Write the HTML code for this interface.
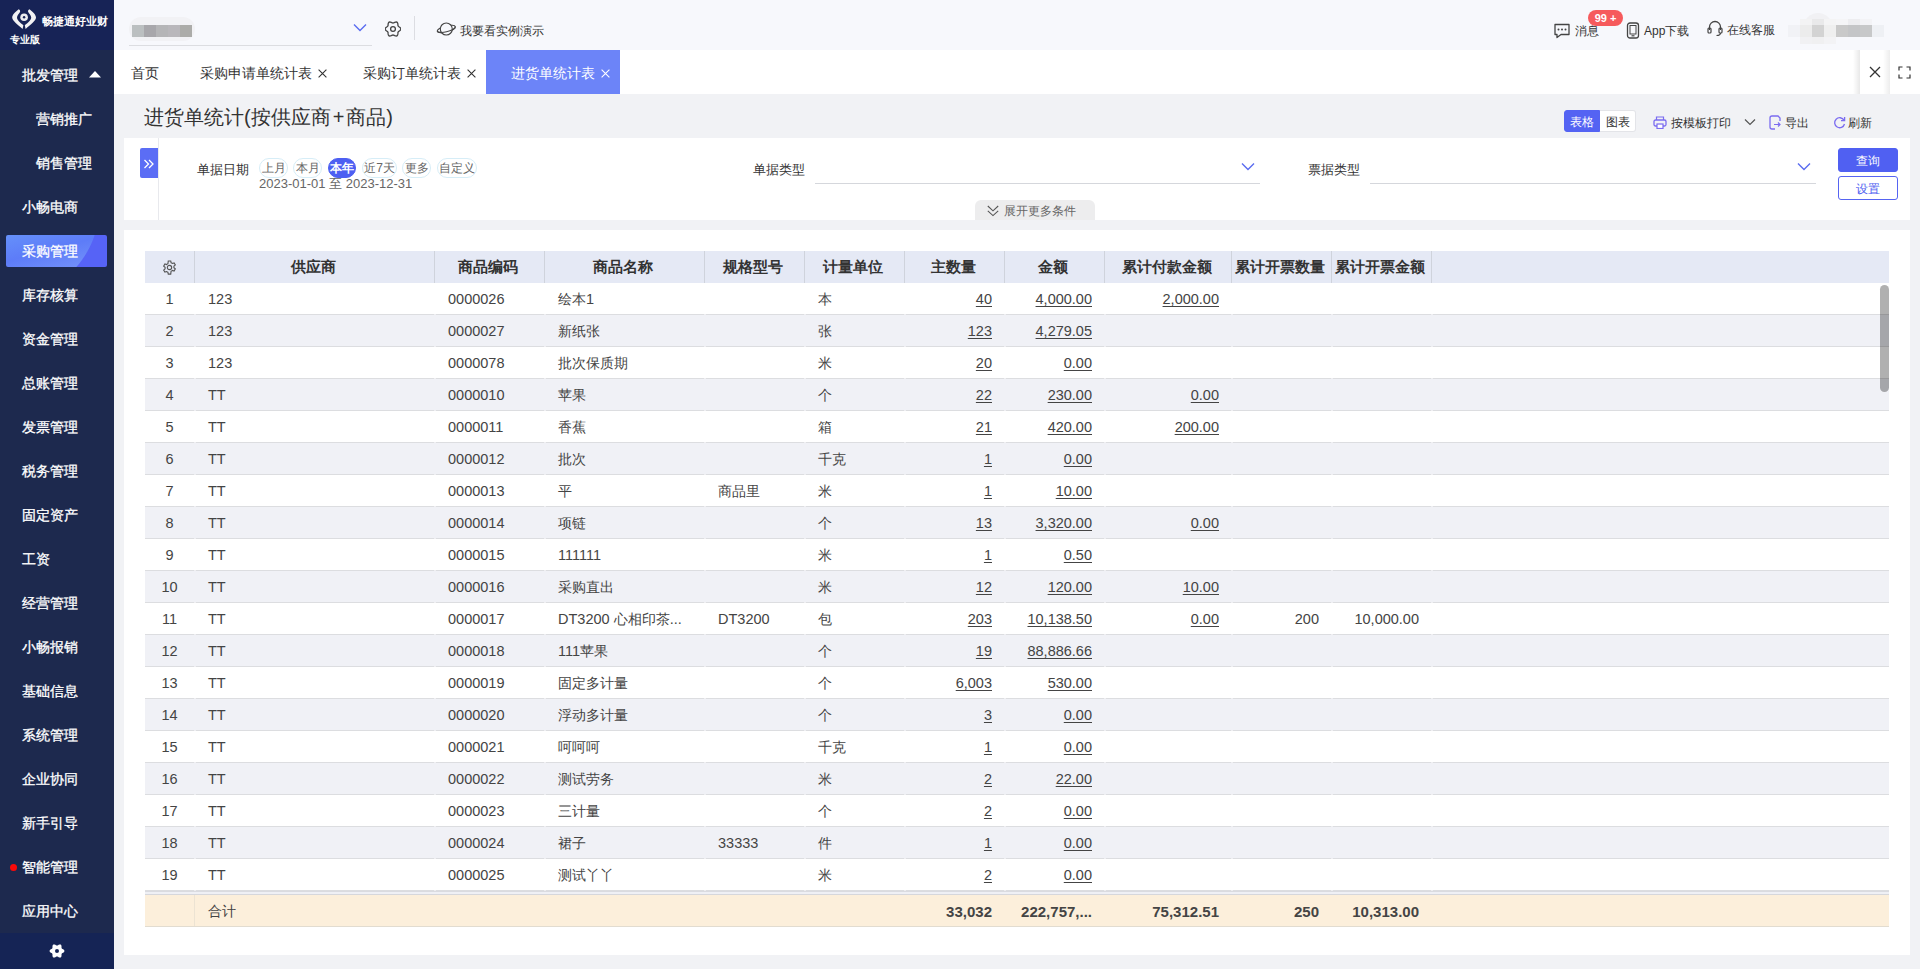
<!DOCTYPE html>
<html><head><meta charset="utf-8">
<style>
*{margin:0;padding:0;box-sizing:border-box}
html,body{width:1920px;height:969px;overflow:hidden;background:#f1f2f5;font-family:"Liberation Sans",sans-serif;color:#333}
.abs{position:absolute}
#side{position:absolute;left:0;top:0;width:114px;height:969px;background:#1d294e}
#logo{position:absolute;left:0;top:0;width:114px;height:50px;background:#172356}
.logot{color:#fff;font-size:11px;line-height:14px;white-space:nowrap;font-weight:bold}
.logot2{color:#fff;font-size:10px;line-height:14px;white-space:nowrap;font-weight:bold}
#sbot{position:absolute;left:0;top:933px;width:114px;height:36px;background:#152455}
.mi{position:absolute;color:#fff;font-size:14px;line-height:20px;white-space:nowrap;-webkit-text-stroke:0.3px #fff}
.act{position:absolute;left:6px;top:235px;width:101px;height:32px;border-radius:2px;background:radial-gradient(circle 95.5px at -1px -30px,rgba(0,0,0,0) 98.5%,#5663f6 99.5%),linear-gradient(165deg,#6590fa 0%,#5d7cf8 45%,#7895fa 100%)}
#top{position:absolute;left:114px;top:0;width:1806px;height:50px;background:#f7f8fc}
.toptxt{font-size:12px;line-height:20px;color:#333;white-space:nowrap}
.badge{width:35px;height:16px;line-height:16px;border-radius:8px;background:#f65a5c;color:#fff;font-size:11px;font-weight:bold;text-align:center;white-space:nowrap}
#tabs{position:absolute;left:114px;top:50px;width:1806px;height:44px;background:#fff}
.tab{position:absolute;top:51px;height:44px;line-height:44px;font-size:14px;color:#333;white-space:nowrap}
.x{margin-left:6px;display:inline-block;vertical-align:0px}
#title{position:absolute;left:144px;top:104px;font-size:20px;color:#333;line-height:26px;white-space:nowrap}
.seg{height:22px;line-height:22px;font-size:12px;text-align:center;border:1px solid #e3e4e8;color:#333}
.tool{font-size:12px;line-height:18px;color:#333;white-space:nowrap}
#filter{position:absolute;left:124px;top:138px;width:1786px;height:82px;background:#fff}
.flab{font-size:13px;line-height:18px;color:#333;white-space:nowrap}
.dt{font-size:13px;line-height:16px;color:#666;white-space:nowrap}
.more{font-size:12px;line-height:16px;color:#666;white-space:nowrap}
.btn{width:60px;height:24px;line-height:25px;font-size:12px;text-align:center;border:1px solid;border-radius:3px}
#tbl{position:absolute;left:124px;top:230px;width:1786px;height:725px;background:#fff}
.pill{position:absolute;top:158px;height:20px;line-height:19px;font-size:12px;color:#666;border:1px solid #d6edf7;border-radius:10px;text-align:center;white-space:nowrap}
.hd{position:absolute;top:251px;height:32px;line-height:32px;font-size:15px;font-weight:bold;color:#333;text-align:center;white-space:nowrap}
.row{position:absolute;left:145px;width:1744px;height:32px;border-bottom:1px solid #dcdde0}
.c{position:absolute;top:1px;height:31px;line-height:31px;font-size:14.5px;color:#444;white-space:nowrap}
.b{font-weight:bold;font-size:15px}
.u{text-decoration:underline;text-underline-offset:2px}
.k{font-size:14px}

</style></head><body>
<div id="side">
<div id="logo"><svg class="abs" style="left:0;top:0" width="48" height="34" viewBox="0 0 48 34"><path d="M18.7 9.2 C15.5 11.5 12.2 14.8 12.2 17.6 C12.2 20.5 17.5 25 22.6 28.9 L23.4 25.3 C20.5 23 17 20.3 17 17.6 C17 15.3 19.2 13.4 20 12 C20.5 10.8 19.8 9.6 18.7 9.2 Z" fill="#f2f2f4"/><path d="M29.5 9.2 C32.7 11.5 36 14.8 36 17.6 C36 20.5 30.7 25 25.6 28.9 L24.8 25.3 C27.7 23 31.2 20.3 31.2 17.6 C31.2 15.3 29 13.4 28.2 12 C27.7 10.8 28.4 9.6 29.5 9.2 Z" fill="#f2f2f4"/><circle cx="24.1" cy="17.3" r="3.8" fill="#ececef"/><circle cx="24.1" cy="17.3" r="1.2" fill="#172356"/></svg><div class="abs logot" style="left:42px;top:14px">畅捷通好业财</div><div class="abs logot2" style="left:10px;top:33px">专业版</div></div>
<div class="mi" style="left:22px;top:65px">批发管理</div><div class="mi" style="left:36px;top:109px">营销推广</div><div class="mi" style="left:36px;top:153px">销售管理</div><div class="mi" style="left:22px;top:197px">小畅电商</div><div class="act"></div><div class="mi" style="left:22px;top:241px">采购管理</div><div class="mi" style="left:22px;top:285px">库存核算</div><div class="mi" style="left:22px;top:329px">资金管理</div><div class="mi" style="left:22px;top:373px">总账管理</div><div class="mi" style="left:22px;top:417px">发票管理</div><div class="mi" style="left:22px;top:461px">税务管理</div><div class="mi" style="left:22px;top:505px">固定资产</div><div class="mi" style="left:22px;top:549px">工资</div><div class="mi" style="left:22px;top:593px">经营管理</div><div class="mi" style="left:22px;top:637px">小畅报销</div><div class="mi" style="left:22px;top:681px">基础信息</div><div class="mi" style="left:22px;top:725px">系统管理</div><div class="mi" style="left:22px;top:769px">企业协同</div><div class="mi" style="left:22px;top:813px">新手引导</div><div class="mi" style="left:22px;top:857px">智能管理</div><div class="mi" style="left:22px;top:901px">应用中心</div><svg class="abs" style="left:89px;top:70px" width="12" height="8" viewBox="0 0 12 8"><path d="M0 7.5 L6 1 L12 7.5Z" fill="#fff"/></svg><div class="abs" style="left:10px;top:864px;width:7px;height:7px;border-radius:50%;background:#fa0a0a"></div><div id="sbot"><svg class="abs" style="left:49px;top:10px" width="16" height="16" viewBox="0 0 16 16"><path fill="#fff" fill-rule="evenodd" d="M15.40 8.00 L15.24 8.63 L14.80 9.20 L14.18 9.66 L13.54 10.02 L13.02 10.34 L12.68 10.70 L12.53 11.17 L12.52 11.79 L12.53 12.53 L12.44 13.29 L12.17 13.95 L11.70 14.41 L11.07 14.59 L10.36 14.48 L9.66 14.18 L9.02 13.81 L8.48 13.51 L8.00 13.40 L7.52 13.51 L6.98 13.81 L6.34 14.18 L5.64 14.48 L4.93 14.59 L4.30 14.41 L3.83 13.95 L3.56 13.29 L3.47 12.53 L3.48 11.79 L3.47 11.17 L3.32 10.70 L2.98 10.34 L2.46 10.02 L1.82 9.66 L1.20 9.20 L0.76 8.63 L0.60 8.00 L0.76 7.37 L1.20 6.80 L1.82 6.34 L2.46 5.98 L2.98 5.66 L3.32 5.30 L3.47 4.83 L3.48 4.21 L3.47 3.47 L3.56 2.71 L3.83 2.05 L4.30 1.59 L4.93 1.41 L5.64 1.52 L6.34 1.82 L6.98 2.19 L7.52 2.49 L8.00 2.60 L8.48 2.49 L9.02 2.19 L9.66 1.82 L10.36 1.52 L11.07 1.41 L11.70 1.59 L12.17 2.05 L12.44 2.71 L12.53 3.47 L12.52 4.21 L12.53 4.83 L12.68 5.30 L13.02 5.66 L13.54 5.98 L14.18 6.34 L14.80 6.80 L15.24 7.37 L15.40 8.00Z M10 8 A2 2 0 1 0 6 8 A2 2 0 1 0 10 8Z"/></svg></div></div>
<div id="top"></div>
<div class="abs" style="left:129px;top:17px;width:66px;height:24px;border-radius:12px;background:#f2f2f5"></div><div class="abs" style="left:132px;top:25px;width:12px;height:12px;background:#bbbfc0"></div><div class="abs" style="left:144px;top:25px;width:12px;height:12px;background:#a8a7ab"></div><div class="abs" style="left:156px;top:25px;width:12px;height:12px;background:#b5b5b7"></div><div class="abs" style="left:168px;top:25px;width:12px;height:12px;background:#b9b7bb"></div><div class="abs" style="left:180px;top:25px;width:12px;height:12px;background:#acaca9"></div><div class="abs" style="left:129px;top:45px;width:243px;height:1px;background:#dcdde1"></div><svg class="abs" style="left:353px;top:23px" width="14" height="9" viewBox="0 0 14 9"><path d="M1 1.5 L7 7.5 L13 1.5" fill="none" stroke="#5a6cf0" stroke-width="1.4"/></svg><svg class="abs" style="left:385px;top:21px" width="16" height="16" viewBox="0 0 16 16"><path d="M15.85 8.00 L15.69 8.67 L15.26 9.28 L14.66 9.79 L14.04 10.20 L13.51 10.57 L13.15 10.97 L12.98 11.49 L12.92 12.13 L12.88 12.88 L12.74 13.65 L12.43 14.33 L11.93 14.80 L11.26 15.00 L10.52 14.93 L9.79 14.66 L9.12 14.33 L8.53 14.05 L8.00 13.95 L7.47 14.05 L6.88 14.33 L6.21 14.66 L5.48 14.93 L4.74 15.00 L4.08 14.80 L3.57 14.33 L3.26 13.65 L3.12 12.88 L3.08 12.13 L3.02 11.49 L2.85 10.97 L2.49 10.57 L1.96 10.20 L1.34 9.79 L0.74 9.28 L0.31 8.67 L0.15 8.00 L0.31 7.33 L0.74 6.72 L1.34 6.21 L1.96 5.80 L2.49 5.43 L2.85 5.02 L3.02 4.51 L3.08 3.87 L3.12 3.12 L3.26 2.35 L3.57 1.67 L4.07 1.20 L4.74 1.00 L5.48 1.07 L6.21 1.34 L6.88 1.67 L7.47 1.95 L8.00 2.05 L8.53 1.95 L9.12 1.67 L9.79 1.34 L10.52 1.07 L11.26 1.00 L11.93 1.20 L12.43 1.67 L12.74 2.35 L12.88 3.12 L12.92 3.87 L12.98 4.51 L13.15 5.02 L13.51 5.43 L14.04 5.80 L14.66 6.21 L15.26 6.72 L15.69 7.33 L15.85 8.00Z" fill="none" stroke="#444" stroke-width="1.3"/><circle cx="8" cy="8" r="2.4" fill="none" stroke="#444" stroke-width="1.3"/></svg><div class="abs" style="left:414px;top:16px;width:1px;height:24px;background:#dcdde2"></div><svg class="abs" style="left:436px;top:21px" width="21" height="16" viewBox="0 0 21 16"><ellipse cx="10.3" cy="8" rx="9.3" ry="3.1" transform="rotate(-14 10.3 8)" fill="none" stroke="#444" stroke-width="1.1"/><circle cx="10.3" cy="8" r="6" fill="#f7f8fc" stroke="#444" stroke-width="1.1"/><path d="M1.2 9.8 A9.3 3.1 -14 0 0 19.3 5.6" transform="rotate(0)" fill="none" stroke="#444" stroke-width="1.1"/></svg><div class="abs toptxt" style="left:460px;top:21px">我要看实例演示</div><svg class="abs" style="left:1553px;top:22px" width="18" height="18" viewBox="0 0 18 18"><path d="M2 2.5h14v10H8l-4 3v-3H2Z" fill="none" stroke="#444" stroke-width="1.3" stroke-linejoin="round"/><circle cx="5.5" cy="7.5" r="1" fill="#444"/><circle cx="9" cy="7.5" r="1" fill="#444"/><circle cx="12.5" cy="7.5" r="1" fill="#444"/></svg><div class="abs toptxt" style="left:1575px;top:21px">消息</div><div class="abs badge" style="left:1588px;top:10px">99 +</div><svg class="abs" style="left:1626px;top:22px" width="14" height="17" viewBox="0 0 14 17"><rect x="1.5" y="1" width="11" height="15" rx="2.5" fill="none" stroke="#444" stroke-width="1.3"/><rect x="4" y="3.5" width="6" height="8.5" fill="none" stroke="#444" stroke-width="1"/><path d="M5.5 13.8h3" stroke="#444" stroke-width="1.2"/></svg><div class="abs toptxt" style="left:1644px;top:21px">App下载</div><svg class="abs" style="left:1707px;top:20px" width="16" height="17" viewBox="0 0 16 17"><path d="M2.5 10V7a5.5 5.5 0 0 1 11 0v3" fill="none" stroke="#444" stroke-width="1.3"/><rect x="1" y="8" width="3" height="5" rx="1" fill="none" stroke="#444" stroke-width="1.2"/><rect x="12" y="8" width="3" height="5" rx="1" fill="none" stroke="#444" stroke-width="1.2"/><path d="M13.5 13c0 2-2 2.5-4 2.5" fill="none" stroke="#444" stroke-width="1.2"/></svg><div class="abs toptxt" style="left:1727px;top:20px">在线客服</div><div class="abs" style="left:1803px;top:13px;width:30px;height:31px;border-radius:50%;background:#f1f1f4"></div><div class="abs" style="left:1788px;top:25px;width:12px;height:12px;background:#f1f2f6"></div><div class="abs" style="left:1800px;top:25px;width:12px;height:12px;background:#ececec"></div><div class="abs" style="left:1812px;top:25px;width:12px;height:12px;background:#d3d3d3"></div><div class="abs" style="left:1824px;top:25px;width:12px;height:12px;background:#efefef"></div><div class="abs" style="left:1836px;top:25px;width:12px;height:12px;background:#c9c9c9"></div><div class="abs" style="left:1848px;top:25px;width:12px;height:12px;background:#c4c5c7"></div><div class="abs" style="left:1860px;top:25px;width:12px;height:12px;background:#c7c8c9"></div><div class="abs" style="left:1872px;top:25px;width:12px;height:12px;background:#eef0f4"></div><div class="abs" style="left:1800px;top:19px;width:12px;height:6px;background:#f3f3f4"></div><div class="abs" style="left:1812px;top:19px;width:12px;height:6px;background:#e9e9ea"></div><div class="abs" style="left:1824px;top:19px;width:12px;height:6px;background:#f4f4f5"></div><div class="abs" style="left:1836px;top:19px;width:12px;height:6px;background:#f5f5f7"></div><div class="abs" style="left:1848px;top:19px;width:12px;height:6px;background:#ededf0"></div><div class="abs" style="left:1860px;top:19px;width:12px;height:6px;background:#f3f3f6"></div><div class="abs" style="left:1800px;top:37px;width:12px;height:7px;background:#f1f1f3"></div><div class="abs" style="left:1812px;top:37px;width:12px;height:7px;background:#f0f0f1"></div><div class="abs" style="left:1824px;top:37px;width:12px;height:7px;background:#f3f3f5"></div><div id="tabs"></div>
<div class="tab" style="left:131px">首页</div><div class="tab" style="left:200px">采购申请单统计表<span class="x"><svg width="9" height="9" viewBox="0 0 9 9"><path d="M0.6 0.6L8.4 8.4M8.4 0.6L0.6 8.4" stroke="currentColor" stroke-width="1.1"/></svg></span></div><div class="tab" style="left:363px">采购订单统计表<span class="x"><svg width="9" height="9" viewBox="0 0 9 9"><path d="M0.6 0.6L8.4 8.4M8.4 0.6L0.6 8.4" stroke="currentColor" stroke-width="1.1"/></svg></span></div><div class="abs" style="left:486px;top:50px;width:134px;height:44px;background:#6c84f8"></div><div class="tab" style="left:511px;color:#fff">进货单统计表<span class="x"><svg width="9" height="9" viewBox="0 0 9 9"><path d="M0.6 0.6L8.4 8.4M8.4 0.6L0.6 8.4" stroke="currentColor" stroke-width="1.1"/></svg></span></div><div class="abs" style="left:1853px;top:50px;width:7px;height:44px;background:linear-gradient(90deg,rgba(0,0,0,0),rgba(0,0,0,0.09))"></div><div class="abs" style="left:1883px;top:50px;width:7px;height:44px;background:linear-gradient(90deg,rgba(0,0,0,0),rgba(0,0,0,0.07))"></div><svg class="abs" style="left:1869px;top:66px" width="12" height="12" viewBox="0 0 12 12"><path d="M1 1L11 11M11 1L1 11" stroke="#333" stroke-width="1.3"/></svg><svg class="abs" style="left:1898px;top:66px" width="13" height="13" viewBox="0 0 13 13"><path d="M1 4.5V1h3.5M8.5 1H12v3.5M12 8.5V12H8.5M4.5 12H1V8.5" fill="none" stroke="#333" stroke-width="1.2"/></svg><div id="title">进货单统计(按供应商<span style="padding:0 2px">+</span>商品)</div>
<div class="abs seg" style="left:1564px;top:110px;width:36px;background:#5463f3;color:#fff;border-color:#5463f3;border-radius:3px 0 0 3px">表格</div><div class="abs seg" style="left:1600px;top:110px;width:36px;background:#fff;border-left:none;border-radius:0 3px 3px 0">图表</div><svg class="abs" style="left:1653px;top:116px" width="14" height="13" viewBox="0 0 14 13"><path d="M3.5 4V1h7v3" fill="none" stroke="#7b6cf0" stroke-width="1.2"/><rect x="1" y="4" width="12" height="6" rx="1.5" fill="none" stroke="#7b6cf0" stroke-width="1.3"/><rect x="4" y="8" width="6" height="4.5" fill="#fff" stroke="#7b6cf0" stroke-width="1.2"/></svg><div class="abs tool" style="left:1671px;top:114px">按模板打印</div><svg class="abs" style="left:1744px;top:118px" width="12" height="8" viewBox="0 0 12 8"><path d="M1 1.5L6 6.5L11 1.5" fill="none" stroke="#555" stroke-width="1.2"/></svg><svg class="abs" style="left:1769px;top:115px" width="12" height="15" viewBox="0 0 12 15"><path d="M6 1H3a2 2 0 0 0-2 2v9a2 2 0 0 0 2 2h3M6 1h3l2 2v3" fill="none" stroke="#7b6cf0" stroke-width="1.3"/><path d="M5 9.5h6M9 7.5l2 2-2 2" fill="none" stroke="#7b6cf0" stroke-width="1.2"/></svg><div class="abs tool" style="left:1785px;top:114px">导出</div><svg class="abs" style="left:1833px;top:116px" width="13" height="13" viewBox="0 0 13 13"><path d="M11 4.2A5 5 0 1 0 11.5 8" fill="none" stroke="#7b6cf0" stroke-width="1.3"/><path d="M11.6 1v3.6H8" fill="none" stroke="#7b6cf0" stroke-width="1.3"/></svg><div class="abs tool" style="left:1848px;top:114px">刷新</div><div id="filter"></div>
<div class="abs" style="left:140px;top:148px;width:18px;height:30px;background:#5b6df5;border-radius:2px 0 0 2px"></div><svg class="abs" style="left:143px;top:159px" width="12" height="10" viewBox="0 0 12 10"><path d="M1.5 1L5.5 5L1.5 9M6 1L10 5L6 9" fill="none" stroke="#fff" stroke-width="1.3"/></svg><div class="abs" style="left:158px;top:138px;width:1px;height:82px;background:#e8e9ed"></div><div class="abs flab" style="left:197px;top:161px">单据日期</div><div class="pill" style="left:259px;width:29px">上月</div><div class="pill" style="left:293px;width:29px">本月</div><div class="pill" style="left:328px;width:28px;background:#4d5ff2;border-color:#4d5ff2;color:#fff;font-weight:bold">本年</div><div class="pill" style="left:362px;width:35px">近7天</div><div class="pill" style="left:402px;width:29px">更多</div><div class="pill" style="left:437px;width:40px">自定义</div><div class="abs dt" style="left:259px;top:176px">2023-01-01 至 2023-12-31</div><div class="abs flab" style="left:753px;top:161px">单据类型</div><div class="abs" style="left:815px;top:183px;width:445px;height:1px;background:#d5d7dc"></div><svg class="abs" style="left:1241px;top:162px" width="14" height="9" viewBox="0 0 14 9"><path d="M1 1.5L7 7.5L13 1.5" fill="none" stroke="#5a6cf0" stroke-width="1.4"/></svg><div class="abs flab" style="left:1308px;top:161px">票据类型</div><div class="abs" style="left:1370px;top:183px;width:446px;height:1px;background:#d5d7dc"></div><svg class="abs" style="left:1797px;top:162px" width="14" height="9" viewBox="0 0 14 9"><path d="M1 1.5L7 7.5L13 1.5" fill="none" stroke="#5a6cf0" stroke-width="1.4"/></svg><div class="abs btn" style="left:1838px;top:148px;background:#5060f2;color:#fff;border-color:#5060f2">查询</div><div class="abs btn" style="left:1838px;top:176px;background:#fff;color:#4d5cf0;border-color:#5664f2">设置</div><div class="abs" style="left:975px;top:200px;width:120px;height:20px;background:#ededee;border-radius:6px 6px 0 0"></div><svg class="abs" style="left:987px;top:205px" width="12" height="12" viewBox="0 0 12 12"><path d="M0.8 1L6 5.8L11.2 1M0.8 5.8L6 10.6L11.2 5.8" fill="none" stroke="#555" stroke-width="1.1"/></svg><div class="abs more" style="left:1004px;top:203px">展开更多条件</div><div id="tbl"></div>
<div class="abs" style="left:145px;top:251px;width:1744px;height:32px;background:#e5e9f5"></div><div class="abs" style="left:194px;top:251px;width:1px;height:32px;background:#cfd3dc"></div><div class="abs" style="left:434px;top:251px;width:1px;height:32px;background:#cfd3dc"></div><div class="abs" style="left:544px;top:251px;width:1px;height:32px;background:#cfd3dc"></div><div class="abs" style="left:704px;top:251px;width:1px;height:32px;background:#cfd3dc"></div><div class="abs" style="left:804px;top:251px;width:1px;height:32px;background:#cfd3dc"></div><div class="abs" style="left:904px;top:251px;width:1px;height:32px;background:#cfd3dc"></div><div class="abs" style="left:1004px;top:251px;width:1px;height:32px;background:#cfd3dc"></div><div class="abs" style="left:1104px;top:251px;width:1px;height:32px;background:#cfd3dc"></div><div class="abs" style="left:1231px;top:251px;width:1px;height:32px;background:#cfd3dc"></div><div class="abs" style="left:1331px;top:251px;width:1px;height:32px;background:#cfd3dc"></div><div class="abs" style="left:1431px;top:251px;width:1px;height:32px;background:#cfd3dc"></div><svg class="abs" style="left:162px;top:260px" width="15" height="15" viewBox="0 0 16 16"><path fill="none" stroke="#555" stroke-width="1.2" d="M6.7 1h2.6l0.4 1.9a5.3 5.3 0 0 1 1.4 0.8l1.8-0.6 1.3 2.2-1.5 1.3a5.3 5.3 0 0 1 0 1.6l1.5 1.3-1.3 2.2-1.8-0.6a5.3 5.3 0 0 1-1.4 0.8L9.3 15H6.7l-0.4-1.9a5.3 5.3 0 0 1-1.4-0.8l-1.8 0.6-1.3-2.2 1.5-1.3a5.3 5.3 0 0 1 0-1.6L1.8 6.5l1.3-2.2 1.8 0.6a5.3 5.3 0 0 1 1.4-0.8Z"/><circle cx="8" cy="8" r="2.3" fill="none" stroke="#555" stroke-width="1.2"/></svg><div class="hd" style="left:193px;width:240px">供应商</div><div class="hd" style="left:433px;width:110px">商品编码</div><div class="hd" style="left:543px;width:160px">商品名称</div><div class="hd" style="left:703px;width:100px">规格型号</div><div class="hd" style="left:803px;width:100px">计量单位</div><div class="hd" style="left:903px;width:100px">主数量</div><div class="hd" style="left:1003px;width:100px">金额</div><div class="hd" style="left:1103px;width:127px">累计付款金额</div><div class="hd" style="left:1230px;width:100px">累计开票数量</div><div class="hd" style="left:1330px;width:100px">累计开票金额</div><div class="row" style="top:283px;background:#fff"><div class="c" style="left:0;width:49px;text-align:center">1</div><div class="c" style="left:63px">123</div><div class="c" style="left:303px">0000026</div><div class="c" style="left:413px"><span class="k">绘本</span>1</div><div class="c" style="left:673px"><span class="k">本</span></div><div class="c r u" style="right:897px">40</div><div class="c r u" style="right:797px">4,000.00</div><div class="c r u" style="right:670px">2,000.00</div></div>
<div class="row" style="top:315px;background:#f0f1f6"><div class="c" style="left:0;width:49px;text-align:center">2</div><div class="c" style="left:63px">123</div><div class="c" style="left:303px">0000027</div><div class="c" style="left:413px"><span class="k">新纸张</span></div><div class="c" style="left:673px"><span class="k">张</span></div><div class="c r u" style="right:897px">123</div><div class="c r u" style="right:797px">4,279.05</div></div>
<div class="row" style="top:347px;background:#fff"><div class="c" style="left:0;width:49px;text-align:center">3</div><div class="c" style="left:63px">123</div><div class="c" style="left:303px">0000078</div><div class="c" style="left:413px"><span class="k">批次保质期</span></div><div class="c" style="left:673px"><span class="k">米</span></div><div class="c r u" style="right:897px">20</div><div class="c r u" style="right:797px">0.00</div></div>
<div class="row" style="top:379px;background:#f0f1f6"><div class="c" style="left:0;width:49px;text-align:center">4</div><div class="c" style="left:63px">TT</div><div class="c" style="left:303px">0000010</div><div class="c" style="left:413px"><span class="k">苹果</span></div><div class="c" style="left:673px"><span class="k">个</span></div><div class="c r u" style="right:897px">22</div><div class="c r u" style="right:797px">230.00</div><div class="c r u" style="right:670px">0.00</div></div>
<div class="row" style="top:411px;background:#fff"><div class="c" style="left:0;width:49px;text-align:center">5</div><div class="c" style="left:63px">TT</div><div class="c" style="left:303px">0000011</div><div class="c" style="left:413px"><span class="k">香蕉</span></div><div class="c" style="left:673px"><span class="k">箱</span></div><div class="c r u" style="right:897px">21</div><div class="c r u" style="right:797px">420.00</div><div class="c r u" style="right:670px">200.00</div></div>
<div class="row" style="top:443px;background:#f0f1f6"><div class="c" style="left:0;width:49px;text-align:center">6</div><div class="c" style="left:63px">TT</div><div class="c" style="left:303px">0000012</div><div class="c" style="left:413px"><span class="k">批次</span></div><div class="c" style="left:673px"><span class="k">千克</span></div><div class="c r u" style="right:897px">1</div><div class="c r u" style="right:797px">0.00</div></div>
<div class="row" style="top:475px;background:#fff"><div class="c" style="left:0;width:49px;text-align:center">7</div><div class="c" style="left:63px">TT</div><div class="c" style="left:303px">0000013</div><div class="c" style="left:413px"><span class="k">平</span></div><div class="c" style="left:573px"><span class="k">商品里</span></div><div class="c" style="left:673px"><span class="k">米</span></div><div class="c r u" style="right:897px">1</div><div class="c r u" style="right:797px">10.00</div></div>
<div class="row" style="top:507px;background:#f0f1f6"><div class="c" style="left:0;width:49px;text-align:center">8</div><div class="c" style="left:63px">TT</div><div class="c" style="left:303px">0000014</div><div class="c" style="left:413px"><span class="k">项链</span></div><div class="c" style="left:673px"><span class="k">个</span></div><div class="c r u" style="right:897px">13</div><div class="c r u" style="right:797px">3,320.00</div><div class="c r u" style="right:670px">0.00</div></div>
<div class="row" style="top:539px;background:#fff"><div class="c" style="left:0;width:49px;text-align:center">9</div><div class="c" style="left:63px">TT</div><div class="c" style="left:303px">0000015</div><div class="c" style="left:413px">111111</div><div class="c" style="left:673px"><span class="k">米</span></div><div class="c r u" style="right:897px">1</div><div class="c r u" style="right:797px">0.50</div></div>
<div class="row" style="top:571px;background:#f0f1f6"><div class="c" style="left:0;width:49px;text-align:center">10</div><div class="c" style="left:63px">TT</div><div class="c" style="left:303px">0000016</div><div class="c" style="left:413px"><span class="k">采购直出</span></div><div class="c" style="left:673px"><span class="k">米</span></div><div class="c r u" style="right:897px">12</div><div class="c r u" style="right:797px">120.00</div><div class="c r u" style="right:670px">10.00</div></div>
<div class="row" style="top:603px;background:#fff"><div class="c" style="left:0;width:49px;text-align:center">11</div><div class="c" style="left:63px">TT</div><div class="c" style="left:303px">0000017</div><div class="c" style="left:413px">DT3200 <span class="k">心相印茶</span>...</div><div class="c" style="left:573px">DT3200</div><div class="c" style="left:673px"><span class="k">包</span></div><div class="c r u" style="right:897px">203</div><div class="c r u" style="right:797px">10,138.50</div><div class="c r u" style="right:670px">0.00</div><div class="c r" style="right:570px">200</div><div class="c r" style="right:470px">10,000.00</div></div>
<div class="row" style="top:635px;background:#f0f1f6"><div class="c" style="left:0;width:49px;text-align:center">12</div><div class="c" style="left:63px">TT</div><div class="c" style="left:303px">0000018</div><div class="c" style="left:413px">111<span class="k">苹果</span></div><div class="c" style="left:673px"><span class="k">个</span></div><div class="c r u" style="right:897px">19</div><div class="c r u" style="right:797px">88,886.66</div></div>
<div class="row" style="top:667px;background:#fff"><div class="c" style="left:0;width:49px;text-align:center">13</div><div class="c" style="left:63px">TT</div><div class="c" style="left:303px">0000019</div><div class="c" style="left:413px"><span class="k">固定多计量</span></div><div class="c" style="left:673px"><span class="k">个</span></div><div class="c r u" style="right:897px">6,003</div><div class="c r u" style="right:797px">530.00</div></div>
<div class="row" style="top:699px;background:#f0f1f6"><div class="c" style="left:0;width:49px;text-align:center">14</div><div class="c" style="left:63px">TT</div><div class="c" style="left:303px">0000020</div><div class="c" style="left:413px"><span class="k">浮动多计量</span></div><div class="c" style="left:673px"><span class="k">个</span></div><div class="c r u" style="right:897px">3</div><div class="c r u" style="right:797px">0.00</div></div>
<div class="row" style="top:731px;background:#fff"><div class="c" style="left:0;width:49px;text-align:center">15</div><div class="c" style="left:63px">TT</div><div class="c" style="left:303px">0000021</div><div class="c" style="left:413px"><span class="k">呵呵呵</span></div><div class="c" style="left:673px"><span class="k">千克</span></div><div class="c r u" style="right:897px">1</div><div class="c r u" style="right:797px">0.00</div></div>
<div class="row" style="top:763px;background:#f0f1f6"><div class="c" style="left:0;width:49px;text-align:center">16</div><div class="c" style="left:63px">TT</div><div class="c" style="left:303px">0000022</div><div class="c" style="left:413px"><span class="k">测试劳务</span></div><div class="c" style="left:673px"><span class="k">米</span></div><div class="c r u" style="right:897px">2</div><div class="c r u" style="right:797px">22.00</div></div>
<div class="row" style="top:795px;background:#fff"><div class="c" style="left:0;width:49px;text-align:center">17</div><div class="c" style="left:63px">TT</div><div class="c" style="left:303px">0000023</div><div class="c" style="left:413px"><span class="k">三计量</span></div><div class="c" style="left:673px"><span class="k">个</span></div><div class="c r u" style="right:897px">2</div><div class="c r u" style="right:797px">0.00</div></div>
<div class="row" style="top:827px;background:#f0f1f6"><div class="c" style="left:0;width:49px;text-align:center">18</div><div class="c" style="left:63px">TT</div><div class="c" style="left:303px">0000024</div><div class="c" style="left:413px"><span class="k">裙子</span></div><div class="c" style="left:573px">33333</div><div class="c" style="left:673px"><span class="k">件</span></div><div class="c r u" style="right:897px">1</div><div class="c r u" style="right:797px">0.00</div></div>
<div class="row" style="top:859px;background:#fff"><div class="c" style="left:0;width:49px;text-align:center">19</div><div class="c" style="left:63px">TT</div><div class="c" style="left:303px">0000025</div><div class="c" style="left:413px"><span class="k">测试丫丫</span></div><div class="c" style="left:673px"><span class="k">米</span></div><div class="c r u" style="right:897px">2</div><div class="c r u" style="right:797px">0.00</div></div>
<div class="abs" style="left:194px;top:314px;width:2px;height:1px;background:#eeeef1"></div><div class="abs" style="left:434px;top:314px;width:2px;height:1px;background:#eeeef1"></div><div class="abs" style="left:544px;top:314px;width:2px;height:1px;background:#eeeef1"></div><div class="abs" style="left:704px;top:314px;width:2px;height:1px;background:#eeeef1"></div><div class="abs" style="left:804px;top:314px;width:2px;height:1px;background:#eeeef1"></div><div class="abs" style="left:904px;top:314px;width:2px;height:1px;background:#eeeef1"></div><div class="abs" style="left:1004px;top:314px;width:2px;height:1px;background:#eeeef1"></div><div class="abs" style="left:1104px;top:314px;width:2px;height:1px;background:#eeeef1"></div><div class="abs" style="left:1231px;top:314px;width:2px;height:1px;background:#eeeef1"></div><div class="abs" style="left:1331px;top:314px;width:2px;height:1px;background:#eeeef1"></div><div class="abs" style="left:1431px;top:314px;width:2px;height:1px;background:#eeeef1"></div><div class="abs" style="left:194px;top:346px;width:2px;height:1px;background:#eeeef1"></div><div class="abs" style="left:434px;top:346px;width:2px;height:1px;background:#eeeef1"></div><div class="abs" style="left:544px;top:346px;width:2px;height:1px;background:#eeeef1"></div><div class="abs" style="left:704px;top:346px;width:2px;height:1px;background:#eeeef1"></div><div class="abs" style="left:804px;top:346px;width:2px;height:1px;background:#eeeef1"></div><div class="abs" style="left:904px;top:346px;width:2px;height:1px;background:#eeeef1"></div><div class="abs" style="left:1004px;top:346px;width:2px;height:1px;background:#eeeef1"></div><div class="abs" style="left:1104px;top:346px;width:2px;height:1px;background:#eeeef1"></div><div class="abs" style="left:1231px;top:346px;width:2px;height:1px;background:#eeeef1"></div><div class="abs" style="left:1331px;top:346px;width:2px;height:1px;background:#eeeef1"></div><div class="abs" style="left:1431px;top:346px;width:2px;height:1px;background:#eeeef1"></div><div class="abs" style="left:194px;top:378px;width:2px;height:1px;background:#eeeef1"></div><div class="abs" style="left:434px;top:378px;width:2px;height:1px;background:#eeeef1"></div><div class="abs" style="left:544px;top:378px;width:2px;height:1px;background:#eeeef1"></div><div class="abs" style="left:704px;top:378px;width:2px;height:1px;background:#eeeef1"></div><div class="abs" style="left:804px;top:378px;width:2px;height:1px;background:#eeeef1"></div><div class="abs" style="left:904px;top:378px;width:2px;height:1px;background:#eeeef1"></div><div class="abs" style="left:1004px;top:378px;width:2px;height:1px;background:#eeeef1"></div><div class="abs" style="left:1104px;top:378px;width:2px;height:1px;background:#eeeef1"></div><div class="abs" style="left:1231px;top:378px;width:2px;height:1px;background:#eeeef1"></div><div class="abs" style="left:1331px;top:378px;width:2px;height:1px;background:#eeeef1"></div><div class="abs" style="left:1431px;top:378px;width:2px;height:1px;background:#eeeef1"></div><div class="abs" style="left:194px;top:410px;width:2px;height:1px;background:#eeeef1"></div><div class="abs" style="left:434px;top:410px;width:2px;height:1px;background:#eeeef1"></div><div class="abs" style="left:544px;top:410px;width:2px;height:1px;background:#eeeef1"></div><div class="abs" style="left:704px;top:410px;width:2px;height:1px;background:#eeeef1"></div><div class="abs" style="left:804px;top:410px;width:2px;height:1px;background:#eeeef1"></div><div class="abs" style="left:904px;top:410px;width:2px;height:1px;background:#eeeef1"></div><div class="abs" style="left:1004px;top:410px;width:2px;height:1px;background:#eeeef1"></div><div class="abs" style="left:1104px;top:410px;width:2px;height:1px;background:#eeeef1"></div><div class="abs" style="left:1231px;top:410px;width:2px;height:1px;background:#eeeef1"></div><div class="abs" style="left:1331px;top:410px;width:2px;height:1px;background:#eeeef1"></div><div class="abs" style="left:1431px;top:410px;width:2px;height:1px;background:#eeeef1"></div><div class="abs" style="left:194px;top:442px;width:2px;height:1px;background:#eeeef1"></div><div class="abs" style="left:434px;top:442px;width:2px;height:1px;background:#eeeef1"></div><div class="abs" style="left:544px;top:442px;width:2px;height:1px;background:#eeeef1"></div><div class="abs" style="left:704px;top:442px;width:2px;height:1px;background:#eeeef1"></div><div class="abs" style="left:804px;top:442px;width:2px;height:1px;background:#eeeef1"></div><div class="abs" style="left:904px;top:442px;width:2px;height:1px;background:#eeeef1"></div><div class="abs" style="left:1004px;top:442px;width:2px;height:1px;background:#eeeef1"></div><div class="abs" style="left:1104px;top:442px;width:2px;height:1px;background:#eeeef1"></div><div class="abs" style="left:1231px;top:442px;width:2px;height:1px;background:#eeeef1"></div><div class="abs" style="left:1331px;top:442px;width:2px;height:1px;background:#eeeef1"></div><div class="abs" style="left:1431px;top:442px;width:2px;height:1px;background:#eeeef1"></div><div class="abs" style="left:194px;top:474px;width:2px;height:1px;background:#eeeef1"></div><div class="abs" style="left:434px;top:474px;width:2px;height:1px;background:#eeeef1"></div><div class="abs" style="left:544px;top:474px;width:2px;height:1px;background:#eeeef1"></div><div class="abs" style="left:704px;top:474px;width:2px;height:1px;background:#eeeef1"></div><div class="abs" style="left:804px;top:474px;width:2px;height:1px;background:#eeeef1"></div><div class="abs" style="left:904px;top:474px;width:2px;height:1px;background:#eeeef1"></div><div class="abs" style="left:1004px;top:474px;width:2px;height:1px;background:#eeeef1"></div><div class="abs" style="left:1104px;top:474px;width:2px;height:1px;background:#eeeef1"></div><div class="abs" style="left:1231px;top:474px;width:2px;height:1px;background:#eeeef1"></div><div class="abs" style="left:1331px;top:474px;width:2px;height:1px;background:#eeeef1"></div><div class="abs" style="left:1431px;top:474px;width:2px;height:1px;background:#eeeef1"></div><div class="abs" style="left:194px;top:506px;width:2px;height:1px;background:#eeeef1"></div><div class="abs" style="left:434px;top:506px;width:2px;height:1px;background:#eeeef1"></div><div class="abs" style="left:544px;top:506px;width:2px;height:1px;background:#eeeef1"></div><div class="abs" style="left:704px;top:506px;width:2px;height:1px;background:#eeeef1"></div><div class="abs" style="left:804px;top:506px;width:2px;height:1px;background:#eeeef1"></div><div class="abs" style="left:904px;top:506px;width:2px;height:1px;background:#eeeef1"></div><div class="abs" style="left:1004px;top:506px;width:2px;height:1px;background:#eeeef1"></div><div class="abs" style="left:1104px;top:506px;width:2px;height:1px;background:#eeeef1"></div><div class="abs" style="left:1231px;top:506px;width:2px;height:1px;background:#eeeef1"></div><div class="abs" style="left:1331px;top:506px;width:2px;height:1px;background:#eeeef1"></div><div class="abs" style="left:1431px;top:506px;width:2px;height:1px;background:#eeeef1"></div><div class="abs" style="left:194px;top:538px;width:2px;height:1px;background:#eeeef1"></div><div class="abs" style="left:434px;top:538px;width:2px;height:1px;background:#eeeef1"></div><div class="abs" style="left:544px;top:538px;width:2px;height:1px;background:#eeeef1"></div><div class="abs" style="left:704px;top:538px;width:2px;height:1px;background:#eeeef1"></div><div class="abs" style="left:804px;top:538px;width:2px;height:1px;background:#eeeef1"></div><div class="abs" style="left:904px;top:538px;width:2px;height:1px;background:#eeeef1"></div><div class="abs" style="left:1004px;top:538px;width:2px;height:1px;background:#eeeef1"></div><div class="abs" style="left:1104px;top:538px;width:2px;height:1px;background:#eeeef1"></div><div class="abs" style="left:1231px;top:538px;width:2px;height:1px;background:#eeeef1"></div><div class="abs" style="left:1331px;top:538px;width:2px;height:1px;background:#eeeef1"></div><div class="abs" style="left:1431px;top:538px;width:2px;height:1px;background:#eeeef1"></div><div class="abs" style="left:194px;top:570px;width:2px;height:1px;background:#eeeef1"></div><div class="abs" style="left:434px;top:570px;width:2px;height:1px;background:#eeeef1"></div><div class="abs" style="left:544px;top:570px;width:2px;height:1px;background:#eeeef1"></div><div class="abs" style="left:704px;top:570px;width:2px;height:1px;background:#eeeef1"></div><div class="abs" style="left:804px;top:570px;width:2px;height:1px;background:#eeeef1"></div><div class="abs" style="left:904px;top:570px;width:2px;height:1px;background:#eeeef1"></div><div class="abs" style="left:1004px;top:570px;width:2px;height:1px;background:#eeeef1"></div><div class="abs" style="left:1104px;top:570px;width:2px;height:1px;background:#eeeef1"></div><div class="abs" style="left:1231px;top:570px;width:2px;height:1px;background:#eeeef1"></div><div class="abs" style="left:1331px;top:570px;width:2px;height:1px;background:#eeeef1"></div><div class="abs" style="left:1431px;top:570px;width:2px;height:1px;background:#eeeef1"></div><div class="abs" style="left:194px;top:602px;width:2px;height:1px;background:#eeeef1"></div><div class="abs" style="left:434px;top:602px;width:2px;height:1px;background:#eeeef1"></div><div class="abs" style="left:544px;top:602px;width:2px;height:1px;background:#eeeef1"></div><div class="abs" style="left:704px;top:602px;width:2px;height:1px;background:#eeeef1"></div><div class="abs" style="left:804px;top:602px;width:2px;height:1px;background:#eeeef1"></div><div class="abs" style="left:904px;top:602px;width:2px;height:1px;background:#eeeef1"></div><div class="abs" style="left:1004px;top:602px;width:2px;height:1px;background:#eeeef1"></div><div class="abs" style="left:1104px;top:602px;width:2px;height:1px;background:#eeeef1"></div><div class="abs" style="left:1231px;top:602px;width:2px;height:1px;background:#eeeef1"></div><div class="abs" style="left:1331px;top:602px;width:2px;height:1px;background:#eeeef1"></div><div class="abs" style="left:1431px;top:602px;width:2px;height:1px;background:#eeeef1"></div><div class="abs" style="left:194px;top:634px;width:2px;height:1px;background:#eeeef1"></div><div class="abs" style="left:434px;top:634px;width:2px;height:1px;background:#eeeef1"></div><div class="abs" style="left:544px;top:634px;width:2px;height:1px;background:#eeeef1"></div><div class="abs" style="left:704px;top:634px;width:2px;height:1px;background:#eeeef1"></div><div class="abs" style="left:804px;top:634px;width:2px;height:1px;background:#eeeef1"></div><div class="abs" style="left:904px;top:634px;width:2px;height:1px;background:#eeeef1"></div><div class="abs" style="left:1004px;top:634px;width:2px;height:1px;background:#eeeef1"></div><div class="abs" style="left:1104px;top:634px;width:2px;height:1px;background:#eeeef1"></div><div class="abs" style="left:1231px;top:634px;width:2px;height:1px;background:#eeeef1"></div><div class="abs" style="left:1331px;top:634px;width:2px;height:1px;background:#eeeef1"></div><div class="abs" style="left:1431px;top:634px;width:2px;height:1px;background:#eeeef1"></div><div class="abs" style="left:194px;top:666px;width:2px;height:1px;background:#eeeef1"></div><div class="abs" style="left:434px;top:666px;width:2px;height:1px;background:#eeeef1"></div><div class="abs" style="left:544px;top:666px;width:2px;height:1px;background:#eeeef1"></div><div class="abs" style="left:704px;top:666px;width:2px;height:1px;background:#eeeef1"></div><div class="abs" style="left:804px;top:666px;width:2px;height:1px;background:#eeeef1"></div><div class="abs" style="left:904px;top:666px;width:2px;height:1px;background:#eeeef1"></div><div class="abs" style="left:1004px;top:666px;width:2px;height:1px;background:#eeeef1"></div><div class="abs" style="left:1104px;top:666px;width:2px;height:1px;background:#eeeef1"></div><div class="abs" style="left:1231px;top:666px;width:2px;height:1px;background:#eeeef1"></div><div class="abs" style="left:1331px;top:666px;width:2px;height:1px;background:#eeeef1"></div><div class="abs" style="left:1431px;top:666px;width:2px;height:1px;background:#eeeef1"></div><div class="abs" style="left:194px;top:698px;width:2px;height:1px;background:#eeeef1"></div><div class="abs" style="left:434px;top:698px;width:2px;height:1px;background:#eeeef1"></div><div class="abs" style="left:544px;top:698px;width:2px;height:1px;background:#eeeef1"></div><div class="abs" style="left:704px;top:698px;width:2px;height:1px;background:#eeeef1"></div><div class="abs" style="left:804px;top:698px;width:2px;height:1px;background:#eeeef1"></div><div class="abs" style="left:904px;top:698px;width:2px;height:1px;background:#eeeef1"></div><div class="abs" style="left:1004px;top:698px;width:2px;height:1px;background:#eeeef1"></div><div class="abs" style="left:1104px;top:698px;width:2px;height:1px;background:#eeeef1"></div><div class="abs" style="left:1231px;top:698px;width:2px;height:1px;background:#eeeef1"></div><div class="abs" style="left:1331px;top:698px;width:2px;height:1px;background:#eeeef1"></div><div class="abs" style="left:1431px;top:698px;width:2px;height:1px;background:#eeeef1"></div><div class="abs" style="left:194px;top:730px;width:2px;height:1px;background:#eeeef1"></div><div class="abs" style="left:434px;top:730px;width:2px;height:1px;background:#eeeef1"></div><div class="abs" style="left:544px;top:730px;width:2px;height:1px;background:#eeeef1"></div><div class="abs" style="left:704px;top:730px;width:2px;height:1px;background:#eeeef1"></div><div class="abs" style="left:804px;top:730px;width:2px;height:1px;background:#eeeef1"></div><div class="abs" style="left:904px;top:730px;width:2px;height:1px;background:#eeeef1"></div><div class="abs" style="left:1004px;top:730px;width:2px;height:1px;background:#eeeef1"></div><div class="abs" style="left:1104px;top:730px;width:2px;height:1px;background:#eeeef1"></div><div class="abs" style="left:1231px;top:730px;width:2px;height:1px;background:#eeeef1"></div><div class="abs" style="left:1331px;top:730px;width:2px;height:1px;background:#eeeef1"></div><div class="abs" style="left:1431px;top:730px;width:2px;height:1px;background:#eeeef1"></div><div class="abs" style="left:194px;top:762px;width:2px;height:1px;background:#eeeef1"></div><div class="abs" style="left:434px;top:762px;width:2px;height:1px;background:#eeeef1"></div><div class="abs" style="left:544px;top:762px;width:2px;height:1px;background:#eeeef1"></div><div class="abs" style="left:704px;top:762px;width:2px;height:1px;background:#eeeef1"></div><div class="abs" style="left:804px;top:762px;width:2px;height:1px;background:#eeeef1"></div><div class="abs" style="left:904px;top:762px;width:2px;height:1px;background:#eeeef1"></div><div class="abs" style="left:1004px;top:762px;width:2px;height:1px;background:#eeeef1"></div><div class="abs" style="left:1104px;top:762px;width:2px;height:1px;background:#eeeef1"></div><div class="abs" style="left:1231px;top:762px;width:2px;height:1px;background:#eeeef1"></div><div class="abs" style="left:1331px;top:762px;width:2px;height:1px;background:#eeeef1"></div><div class="abs" style="left:1431px;top:762px;width:2px;height:1px;background:#eeeef1"></div><div class="abs" style="left:194px;top:794px;width:2px;height:1px;background:#eeeef1"></div><div class="abs" style="left:434px;top:794px;width:2px;height:1px;background:#eeeef1"></div><div class="abs" style="left:544px;top:794px;width:2px;height:1px;background:#eeeef1"></div><div class="abs" style="left:704px;top:794px;width:2px;height:1px;background:#eeeef1"></div><div class="abs" style="left:804px;top:794px;width:2px;height:1px;background:#eeeef1"></div><div class="abs" style="left:904px;top:794px;width:2px;height:1px;background:#eeeef1"></div><div class="abs" style="left:1004px;top:794px;width:2px;height:1px;background:#eeeef1"></div><div class="abs" style="left:1104px;top:794px;width:2px;height:1px;background:#eeeef1"></div><div class="abs" style="left:1231px;top:794px;width:2px;height:1px;background:#eeeef1"></div><div class="abs" style="left:1331px;top:794px;width:2px;height:1px;background:#eeeef1"></div><div class="abs" style="left:1431px;top:794px;width:2px;height:1px;background:#eeeef1"></div><div class="abs" style="left:194px;top:826px;width:2px;height:1px;background:#eeeef1"></div><div class="abs" style="left:434px;top:826px;width:2px;height:1px;background:#eeeef1"></div><div class="abs" style="left:544px;top:826px;width:2px;height:1px;background:#eeeef1"></div><div class="abs" style="left:704px;top:826px;width:2px;height:1px;background:#eeeef1"></div><div class="abs" style="left:804px;top:826px;width:2px;height:1px;background:#eeeef1"></div><div class="abs" style="left:904px;top:826px;width:2px;height:1px;background:#eeeef1"></div><div class="abs" style="left:1004px;top:826px;width:2px;height:1px;background:#eeeef1"></div><div class="abs" style="left:1104px;top:826px;width:2px;height:1px;background:#eeeef1"></div><div class="abs" style="left:1231px;top:826px;width:2px;height:1px;background:#eeeef1"></div><div class="abs" style="left:1331px;top:826px;width:2px;height:1px;background:#eeeef1"></div><div class="abs" style="left:1431px;top:826px;width:2px;height:1px;background:#eeeef1"></div><div class="abs" style="left:194px;top:858px;width:2px;height:1px;background:#eeeef1"></div><div class="abs" style="left:434px;top:858px;width:2px;height:1px;background:#eeeef1"></div><div class="abs" style="left:544px;top:858px;width:2px;height:1px;background:#eeeef1"></div><div class="abs" style="left:704px;top:858px;width:2px;height:1px;background:#eeeef1"></div><div class="abs" style="left:804px;top:858px;width:2px;height:1px;background:#eeeef1"></div><div class="abs" style="left:904px;top:858px;width:2px;height:1px;background:#eeeef1"></div><div class="abs" style="left:1004px;top:858px;width:2px;height:1px;background:#eeeef1"></div><div class="abs" style="left:1104px;top:858px;width:2px;height:1px;background:#eeeef1"></div><div class="abs" style="left:1231px;top:858px;width:2px;height:1px;background:#eeeef1"></div><div class="abs" style="left:1331px;top:858px;width:2px;height:1px;background:#eeeef1"></div><div class="abs" style="left:1431px;top:858px;width:2px;height:1px;background:#eeeef1"></div><div class="abs" style="left:194px;top:890px;width:2px;height:1px;background:#eeeef1"></div><div class="abs" style="left:434px;top:890px;width:2px;height:1px;background:#eeeef1"></div><div class="abs" style="left:544px;top:890px;width:2px;height:1px;background:#eeeef1"></div><div class="abs" style="left:704px;top:890px;width:2px;height:1px;background:#eeeef1"></div><div class="abs" style="left:804px;top:890px;width:2px;height:1px;background:#eeeef1"></div><div class="abs" style="left:904px;top:890px;width:2px;height:1px;background:#eeeef1"></div><div class="abs" style="left:1004px;top:890px;width:2px;height:1px;background:#eeeef1"></div><div class="abs" style="left:1104px;top:890px;width:2px;height:1px;background:#eeeef1"></div><div class="abs" style="left:1231px;top:890px;width:2px;height:1px;background:#eeeef1"></div><div class="abs" style="left:1331px;top:890px;width:2px;height:1px;background:#eeeef1"></div><div class="abs" style="left:1431px;top:890px;width:2px;height:1px;background:#eeeef1"></div><div class="abs" style="left:145px;top:891px;width:1744px;height:4px;background:#eff0f5;border-top:1px solid #dadbe0;border-bottom:1px solid #d6d7dc"></div><div class="row sum" style="top:895px;background:#fcefdb;border-bottom:1px solid #e2dcd0"><div class="abs" style="left:49px;top:0;width:1px;height:31px;background:#ece3d3"></div><div class="c" style="left:63px;font-weight:normal"><span class="k">合计</span></div><div class="c r b" style="right:897px">33,032</div><div class="c r b" style="right:797px">222,757,...</div><div class="c r b" style="right:670px">75,312.51</div><div class="c r b" style="right:570px">250</div><div class="c r b" style="right:470px">10,313.00</div></div>
<div class="abs" style="left:1880px;top:285px;width:9px;height:107px;background:rgba(0,0,0,0.31);border-radius:4.5px"></div></body></html>
